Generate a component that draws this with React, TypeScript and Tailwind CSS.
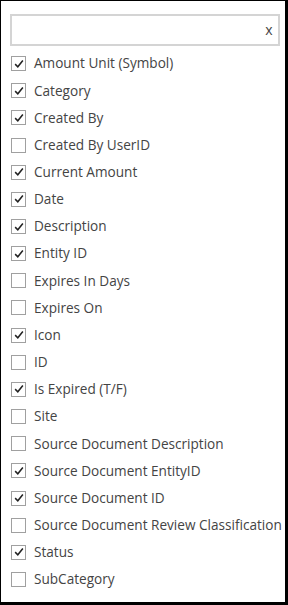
import React, { useState } from 'react';

const FIELDS: { label: string; checked: boolean }[] = [
  { label: 'Amount Unit (Symbol)', checked: true },
  { label: 'Category', checked: true },
  { label: 'Created By', checked: true },
  { label: 'Created By UserID', checked: false },
  { label: 'Current Amount', checked: true },
  { label: 'Date', checked: true },
  { label: 'Description', checked: true },
  { label: 'Entity ID', checked: true },
  { label: 'Expires In Days', checked: false },
  { label: 'Expires On', checked: false },
  { label: 'Icon', checked: true },
  { label: 'ID', checked: false },
  { label: 'Is Expired (T/F)', checked: true },
  { label: 'Site', checked: false },
  { label: 'Source Document Description', checked: false },
  { label: 'Source Document EntityID', checked: true },
  { label: 'Source Document ID', checked: true },
  { label: 'Source Document Review Classification', checked: false },
  { label: 'Status', checked: true },
  { label: 'SubCategory', checked: false },
];

const Check = () => (
  <svg viewBox="0 0 14 14" className="w-[12px] h-[12px]">
    <path d="M2.5 7.2 L5.6 10.2 L11.5 3" fill="none" stroke="#222" strokeWidth="1.8" />
  </svg>
);

export default function App() {
  const [items, setItems] = useState(FIELDS);
  const [query, setQuery] = useState('');

  const toggle = (i: number) =>
    setItems((prev) => prev.map((f, j) => (j === i ? { ...f, checked: !f.checked } : f)));

  return (
    <div
      className="w-[288px] h-[605px] bg-white border-l border-t border-r-[3px] border-b-[3px] border-black overflow-hidden"
      style={{ fontFamily: '"Open Sans", "Noto Sans", sans-serif' }}
    >
      {/* Search */}
      <div className="pl-[9px] pr-[5px] pt-[13px]">
        <div className="h-[32px] border-2 border-[#d4d4d4] flex items-center">
          <input
            value={query}
            onChange={(e) => setQuery(e.target.value)}
            className="flex-1 min-w-0 h-full px-2 text-[13px] outline-none bg-transparent"
          />
          <button
            onClick={() => setQuery('')}
            className="w-[18px] text-[14px] leading-none text-[#444]"
          >
            x
          </button>
        </div>
      </div>

      {/* Field list */}
      <div className="pl-[10px] pt-[4px] flex flex-col">
        {items.map((f, i) => (
          <label key={f.label} className="h-[27.16px] flex items-center gap-[8px] cursor-pointer">
            <span
              onClick={() => toggle(i)}
              className="w-[15px] h-[15px] shrink-0 border border-[#a0a0a0] bg-white flex items-center justify-center"
            >
              {f.checked && <Check />}
            </span>
            <span className="text-[13.6px] text-[#444] whitespace-nowrap">{f.label}</span>
          </label>
        ))}
      </div>
    </div>
  );
}
